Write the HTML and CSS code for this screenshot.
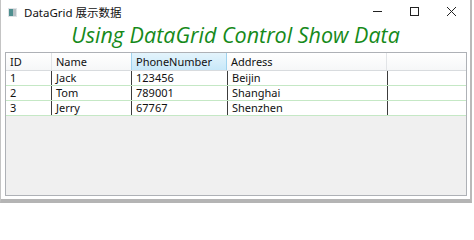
FILE: index.html
```html
<!DOCTYPE html>
<html>
<head>
<meta charset="utf-8">
<link rel="stylesheet" href="styles.css">
</head>
<body>
<div class="window">
  <div class="titlebar">
    <svg class="app-icon" width="9" height="9" viewBox="0 0 9 9">
      <rect x="0" y="0" width="9" height="9" fill="#dfe3e6"/>
      <rect x="1" y="1" width="4" height="7" fill="#4f8f8f"/>
      <rect x="5" y="1" width="3" height="7" fill="#b7c0c4"/>
    </svg>
    <span class="title-text">DataGrid 展示数据</span>
    <div class="controls">
      <svg class="ctl" width="37" height="24" viewBox="0 0 37 24"><line x1="14" y1="11.5" x2="23" y2="11.5" stroke="#222" stroke-width="1"/></svg>
      <svg class="ctl" width="37" height="24" viewBox="0 0 37 24"><rect x="14.5" y="7.5" width="8" height="8" fill="none" stroke="#222" stroke-width="1"/></svg>
      <svg class="ctl" width="37" height="24" viewBox="0 0 37 24"><path d="M14 7 L23 16 M23 7 L14 16" stroke="#222" stroke-width="1"/></svg>
    </div>
  </div>
  <div class="heading">Using DataGrid Control Show Data</div>
  <div class="grid">
    <div class="row header">
      <div class="cell c-id">ID</div>
      <div class="cell c-name">Name</div>
      <div class="cell c-phone hot">PhoneNumber</div>
      <div class="cell c-addr">Address</div>
      <div class="cell c-fill"></div>
    </div>
    <div class="row data">
      <div class="cell c-id">1</div>
      <div class="cell c-name">Jack</div>
      <div class="cell c-phone">123456</div>
      <div class="cell c-addr">Beijin</div>
      <div class="cell c-fill"></div>
    </div>
    <div class="row data">
      <div class="cell c-id">2</div>
      <div class="cell c-name">Tom</div>
      <div class="cell c-phone">789001</div>
      <div class="cell c-addr">Shanghai</div>
      <div class="cell c-fill"></div>
    </div>
    <div class="row data">
      <div class="cell c-id">3</div>
      <div class="cell c-name">Jerry</div>
      <div class="cell c-phone">67767</div>
      <div class="cell c-addr">Shenzhen</div>
      <div class="cell c-fill"></div>
    </div>
  </div>
</div>
</body>
</html>
```

FILE: styles.css
```css
html, body {
  margin: 0;
  padding: 0;
  background: #ffffff;
}
body {
  width: 474px;
  height: 203px;
  overflow: hidden;
  font-family: "Noto Sans", "Open Sans", "Noto Sans CJK SC", sans-serif;
}
.window {
  box-sizing: border-box;
  width: 472px;
  height: 203px;
  border-left: 1px solid #c4c4c4;
  border-right: 2px solid #b9b9b9;
  border-bottom: 4px solid #b4b4b4;
  background: #ffffff;
  display: flex;
  flex-direction: column;
}
.titlebar {
  height: 24px;
  display: flex;
  align-items: center;
  flex-shrink: 0;
}
.app-icon {
  margin-left: 7px;
  margin-right: 7px;
}
.title-text {
  font-size: 11.5px;
  color: #111;
  font-family: "Noto Sans", "Noto Sans CJK SC", sans-serif;
}
.controls {
  margin-left: auto;
  display: flex;
}
.ctl {
  display: block;
}
.heading {
  height: 28px;
  flex-shrink: 0;
  text-align: center;
  font-style: italic;
  font-size: 21.5px;
  line-height: 21px;
  color: #168a1a;
  font-family: "Open Sans", "Noto Sans", sans-serif;
}
.grid {
  margin: 0 3px 0 4px;
  height: 144px;
  box-sizing: border-box;
  border: 1px solid #aeb1b6;
  background: #f0f0f0;
  flex-shrink: 0;
}
.row {
  display: flex;
  font-size: 11px;
  color: #111;
}
.header {
  height: 18px;
  background: linear-gradient(#ffffff, #f6f7f8);
  border-bottom: 1px solid #d8dbde;
  box-sizing: border-box;
}
.header .cell {
  line-height: 17px;
  border-right: 1px solid #e2e4e7;
}
.header .hot {
  background: linear-gradient(#e4f4fc, #c8e8f9);
  border-left: 1px solid #9fd3ef;
  border-right: 1px solid #9fd3ef;
  margin-left: -1px;
}
.data {
  height: 15px;
  background: #ffffff;
  border-bottom: 1px solid #c5e8c5;
  box-sizing: border-box;
}
.data .cell {
  line-height: 14px;
  border-right: 1px solid #3c3c3c;
}
.data .c-fill {
  border-right: none;
}
.cell {
  box-sizing: border-box;
  padding-left: 4px;
  white-space: nowrap;
  overflow: hidden;
}
.c-id { width: 46px; }
.c-name { width: 80px; }
.c-phone { width: 96px; }
.c-addr { width: 160px; }
.c-fill { flex: 1; padding: 0; }
.header .c-fill { border-right: none; }
```
